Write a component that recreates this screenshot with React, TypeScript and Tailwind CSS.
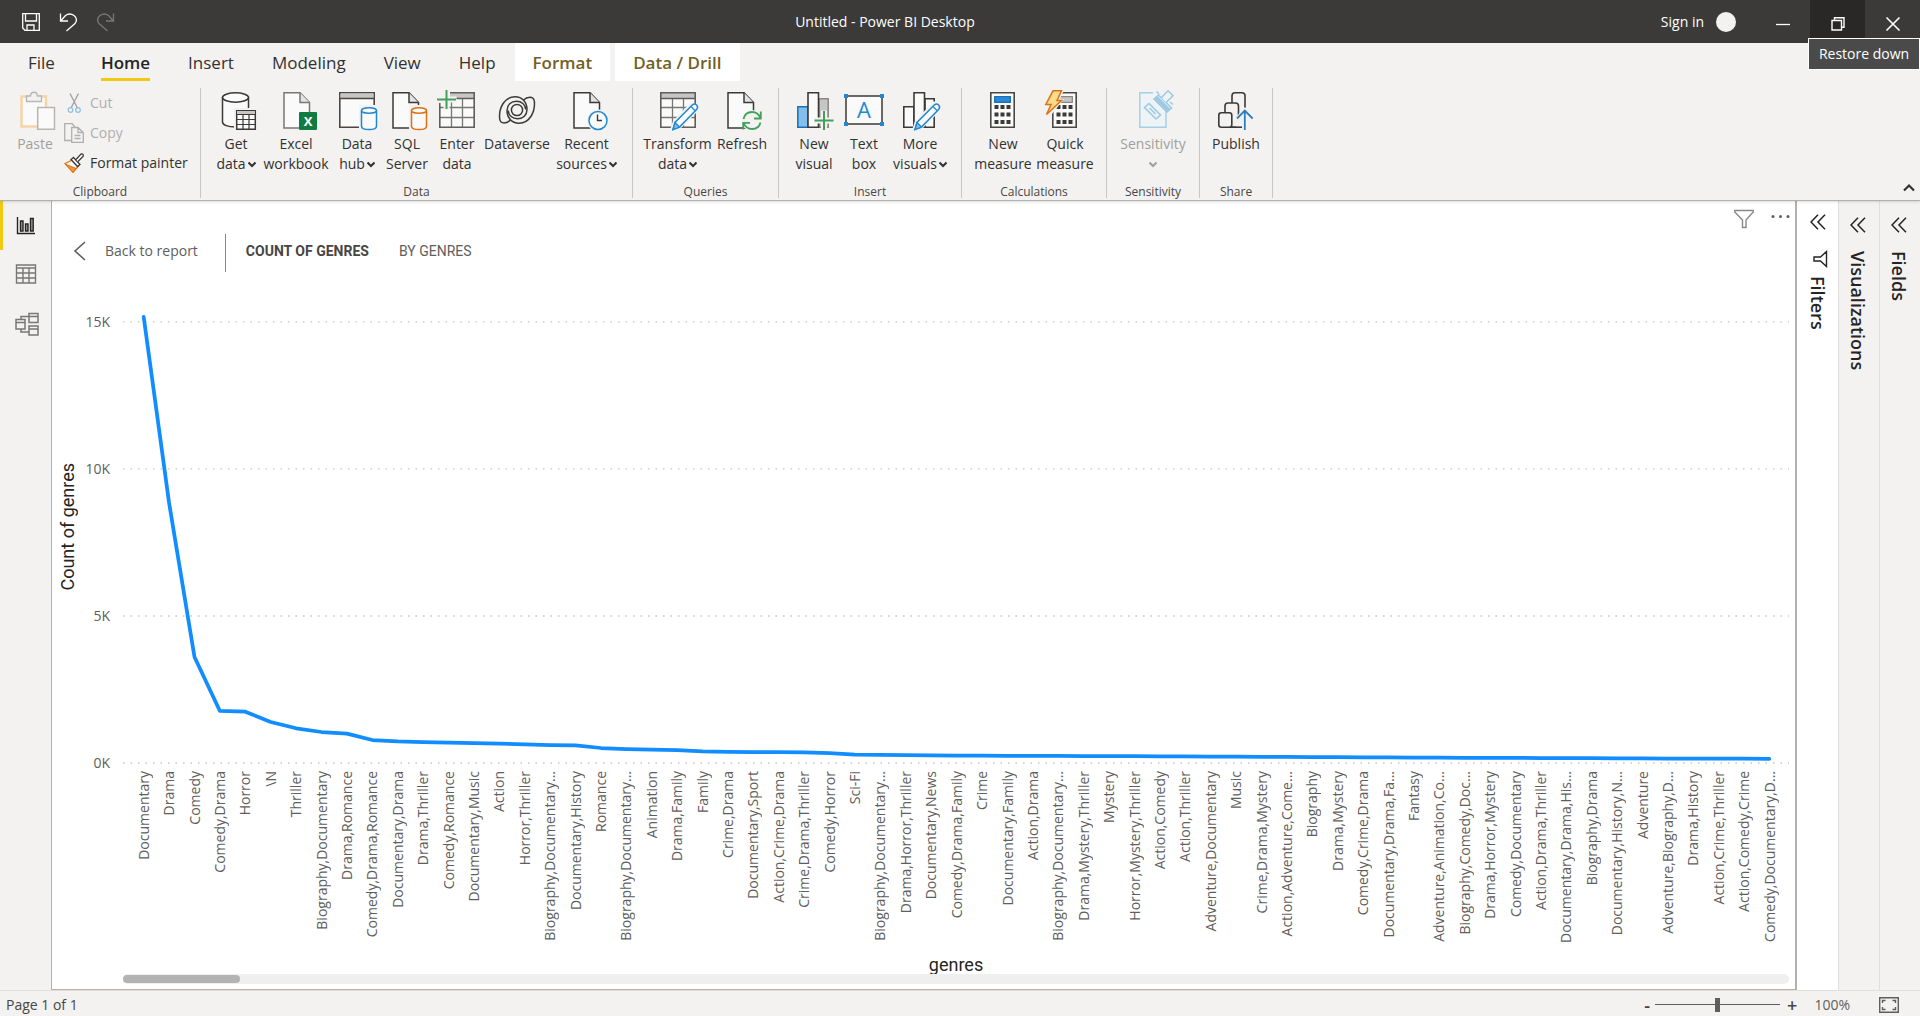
import type { ReactNode } from "react";

interface RibbonItem {
  lines: string[];
  icon: ReactNode;
  width: string;
  caret?: boolean;
  disabled?: boolean;
}

interface RibbonGroupData {
  name: string;
  padding: string;
  items: RibbonItem[];
}

interface GenreCount {
  name: string;
  count: number;
}

const DARK = "#3b3a39";
const BLUE = "#1f88cf";
const GREEN = "#41a05a";

// Top of the y axis, a little above the highest tick
const Y_MAX = 15780;
const TICKS = [15000, 10000, 5000, 0];

const genres: GenreCount[] = [
  { name: "Documentary", count: 15170 },
  { name: "Drama", count: 8840 },
  { name: "Comedy", count: 3605 },
  { name: "Comedy,Drama", count: 1769 },
  { name: "Horror", count: 1745 },
  { name: "\\N", count: 1395 },
  { name: "Thriller", count: 1180 },
  { name: "Biography,Documentary", count: 1054 },
  { name: "Drama,Romance", count: 997 },
  { name: "Comedy,Drama,Romance", count: 782 },
  { name: "Documentary,Drama", count: 738 },
  { name: "Drama,Thriller", count: 714 },
  { name: "Comedy,Romance", count: 690 },
  { name: "Documentary,Music", count: 673 },
  { name: "Action", count: 656 },
  { name: "Horror,Thriller", count: 636 },
  { name: "Biography,Documentary...", count: 612 },
  { name: "Documentary,History", count: 602 },
  { name: "Romance", count: 510 },
  { name: "Biography,Documentary...", count: 476 },
  { name: "Animation", count: 459 },
  { name: "Drama,Family", count: 440 },
  { name: "Family", count: 398 },
  { name: "Crime,Drama", count: 378 },
  { name: "Documentary,Sport", count: 372 },
  { name: "Action,Crime,Drama", count: 367 },
  { name: "Crime,Drama,Thriller", count: 360 },
  { name: "Comedy,Horror", count: 338 },
  { name: "Sci-Fi", count: 286 },
  { name: "Biography,Documentary...", count: 275 },
  { name: "Drama,Horror,Thriller", count: 265 },
  { name: "Documentary,News", count: 256 },
  { name: "Comedy,Drama,Family", count: 252 },
  { name: "Crime", count: 250 },
  { name: "Documentary,Family", count: 246 },
  { name: "Action,Drama", count: 242 },
  { name: "Biography,Documentary...", count: 240 },
  { name: "Drama,Mystery,Thriller", count: 237 },
  { name: "Mystery", count: 234 },
  { name: "Horror,Mystery,Thriller", count: 230 },
  { name: "Action,Comedy", count: 226 },
  { name: "Action,Thriller", count: 222 },
  { name: "Adventure,Documentary", count: 218 },
  { name: "Music", count: 214 },
  { name: "Crime,Drama,Mystery", count: 210 },
  { name: "Action,Adventure,Come...", count: 207 },
  { name: "Biography", count: 204 },
  { name: "Drama,Mystery", count: 200 },
  { name: "Comedy,Crime,Drama", count: 195 },
  { name: "Documentary,Drama,Fa...", count: 190 },
  { name: "Fantasy", count: 184 },
  { name: "Adventure,Animation,Co...", count: 180 },
  { name: "Biography,Comedy,Doc...", count: 177 },
  { name: "Drama,Horror,Mystery", count: 175 },
  { name: "Comedy,Documentary", count: 172 },
  { name: "Action,Drama,Thriller", count: 169 },
  { name: "Documentary,Drama,His...", count: 167 },
  { name: "Biography,Drama", count: 164 },
  { name: "Documentary,History,N...", count: 160 },
  { name: "Adventure", count: 156 },
  { name: "Adventure,Biography,D...", count: 152 },
  { name: "Drama,History", count: 150 },
  { name: "Action,Crime,Thriller", count: 147 },
  { name: "Action,Comedy,Crime", count: 145 },
  { name: "Comedy,Documentary,D...", count: 143 },
];

function Icon({ children }: { children: ReactNode }) {
  return (
    <svg className="h-10 w-10 overflow-visible" viewBox="0 0 40 40" fill="none" aria-hidden="true">
      {children}
    </svg>
  );
}

function Caret() {
  return (
    <svg className="h-2 w-2" viewBox="0 0 8 8" fill="none" stroke="currentColor" strokeWidth="2" aria-hidden="true">
      <path d="M.5 2.5 4 6 7.500 2.500" />
    </svg>
  );
}

/* ---------- shared icon parts ---------- */

function Page({ x = 6, color = DARK }: { x?: number; color?: string }) {
  return (
    <g transform={`translate(${x} 0)`} stroke={color} strokeWidth="1.5">
      <path d="M1 2.8H17L26.5 12.5V38H1Z" fill="#fafafa" />
      <path d="M17 2.8V12.5H26.5" fill="#e4e3e2" />
    </g>
  );
}

function Grid() {
  return (
    <g>
      <path d="M2.8 2.8H37.2V37.2H2.8Z" fill="#fafafa" />
      <path d="M3 3H37V8H3Z" fill="#c8c6c4" />
      <path d="M3 17.5H37M3 27.5H37M14.5 8V37M25.5 8V37" stroke="#797775" strokeWidth="1.3" />
      <path d="M2.8 2.8H37.2V37.2H2.8ZM3 8.5H37" stroke="#605e5c" strokeWidth="1.6" />
    </g>
  );
}

function SmallCylinder({ color }: { color: string }) {
  return (
    <g>
      <path d="M22 15H42V42H22Z" fill="#f3f2f1" />
      <g stroke={color} strokeWidth="1.5">
        <path d="M24.5 20.5V36C24.5 38.2 27.8 39.6 32 39.6S39.5 38.2 39.5 36V20.5" fill="#fafafa" />
        <ellipse cx="32" cy="20.5" rx="7.5" ry="2.8" fill="#fafafa" />
      </g>
    </g>
  );
}

function Pencil() {
  return (
    <g>
      <path d="M11 43 15 31 34 11 42 19 23 38Z" fill="#f3f2f1" />
      <path d="M15 39.5 17 32.5 34.5 14.8C37.5 12.5 41 16 38.8 19.2L21.5 37Z" fill="#fafafa" stroke={BLUE} strokeWidth="1.5" />
      <path d="M15 39.5 17 32.5 21.5 37Z" fill="#83beec" stroke={BLUE} strokeWidth="1.3" />
      <path d="M33 16.5 37 20.5" stroke={BLUE} strokeWidth="1.3" />
    </g>
  );
}

function Plus({ x, y }: { x: number; y: number }) {
  return (
    <g transform={`translate(${x} ${y})`}>
      <path d="M-10 0H10M0-10V10" stroke="#f3f2f1" strokeWidth="6" />
      <path d="M-9.5 0H9.5M0-9.5V9.5" stroke={GREEN} strokeWidth="2" />
    </g>
  );
}

function Keys({ screen, line }: { screen: string; line: string }) {
  return (
    <g>
      <path d="M7.8 2.8H31.2V37.2H7.8Z" fill="#fafafa" stroke="#4a4846" strokeWidth="1.6" />
      <path d="M11.7 6.7H27.3V12.3H11.7Z" fill={screen} stroke={line} strokeWidth="1.3" />
      {[15, 22.5, 30].map((y) =>
        [11.5, 17.5, 23.5].map((x) => <rect key={`${x}-${y}`} x={x} y={y} width="4" height="4" fill={DARK} />)
      )}
    </g>
  );
}

/* ---------- ribbon icons ---------- */

const getDataIcon = (
  <Icon>
    <path d="M6.5 7V32C6.5 35 12 37 19.5 37S32.5 35 32.5 32V7" fill="#fafafa" stroke={DARK} strokeWidth="1.5" />
    <ellipse cx="19.5" cy="7.5" rx="13" ry="4.7" fill="#fafafa" stroke={DARK} strokeWidth="1.5" />
    <path d="M18 18H42V42H18Z" fill="#f3f2f1" />
    <path d="M20.7 20.7H39.3V39.3H20.7Z" fill="#fafafa" stroke={DARK} strokeWidth="1.5" />
    <path d="M21 21H39V24H21Z" fill="#c8c6c4" />
    <path d="M21 24.5H39M21 29.5H39M21 34.5H39M27 25V39M33 25V39" stroke={DARK} strokeWidth="1.2" />
  </Icon>
);

const excelIcon = (
  <Icon>
    <Page x={7} color="#797775" />
    <rect x="23" y="22" width="18" height="18" rx="1" fill="#107c41" />
    <text x="32" y="35.5" textAnchor="middle" fontSize="13" fontWeight="700" fill="#fff" fontFamily="Open Sans, sans-serif">X</text>
  </Icon>
);

const dataHubIcon = (
  <Icon>
    <path d="M2.8 2.8H37.2V37.2H2.8Z" fill="#fafafa" stroke="#4a4846" strokeWidth="1.6" />
    <path d="M3.5 3.5H36.5V8H3.5Z" fill="#c8c6c4" />
    <path d="M3 8.5H37" stroke="#4a4846" strokeWidth="1.5" />
    <SmallCylinder color={BLUE} />
  </Icon>
);

const sqlIcon = (
  <Icon>
    <Page x={5} />
    <SmallCylinder color="#db7215" />
  </Icon>
);

const enterDataIcon = (
  <Icon>
    <Grid />
    <path d="M0 0H13V13H0Z" fill="#f3f2f1" />
    <Plus x={9.5} y={9.5} />
  </Icon>
);

// The swirl is one stroke and the same stroke turned half way round
const SWIRL = "M13.5 30C10 33.5 3.5 34.5 2.7 29C1.5 18 7.5 6.8 18 6.8C25.5 6.8 30 12.5 30 19.5C30 25 26 28.800 20.500 28.800C15.500 28.800 11.500 25.500 11.200 20.500";

const dataverseIcon = (
  <Icon>
    <g stroke={DARK} strokeWidth="1.5">
      <path d={SWIRL} />
      <path d={SWIRL} transform="rotate(180 20 20)" />
      <circle cx="20" cy="20" r="5.6" />
    </g>
  </Icon>
);

const recentIcon = (
  <Icon>
    <Page x={6} />
    <circle cx="31" cy="30.5" r="11" fill="#f3f2f1" />
    <circle cx="31" cy="30.5" r="9" fill="#fafafa" stroke={BLUE} strokeWidth="1.5" />
    <path d="M30.5 24.5V30.5H35" stroke={DARK} strokeWidth="1.4" />
  </Icon>
);

const transformIcon = (
  <Icon>
    <Grid />
    <Pencil />
  </Icon>
);

const refreshIcon = (
  <Icon>
    <Page x={5} />
    <circle cx="30" cy="30.5" r="10.5" fill="#f3f2f1" />
    <g stroke={GREEN} strokeWidth="1.8">
      <path d="M21.5 29C22.5 24.5 26 22 30 22C34 22 37 24.5 38.5 28M38.8 21.5V28.5H32" />
      <path d="M38.5 32.5C37.5 36.5 34 39 30 39C26 39 23 36.5 21.5 33M21.2 39.5V32.8H28" />
    </g>
  </Icon>
);

const newVisualIcon = (
  <Icon>
    <path d="M25 8.8H34.2V37.2H25Z" fill="#c8c6c4" stroke="#8a8886" strokeWidth="1.5" />
    <path d="M3.8 16.8H14V37.2H3.8Z" fill="#83beec" stroke="#1a6fb5" strokeWidth="1.5" />
    <path d="M14 2.8H24.5V37.2H14Z" fill="#fafafa" stroke={DARK} strokeWidth="1.6" />
    <Plus x={30} y={30.5} />
  </Icon>
);

const textBoxIcon = (
  <Icon>
    <path d="M2 6H38V34H2Z" fill="#fafafa" stroke={DARK} strokeWidth="1.5" />
    {[2, 38].map((x) =>
      [6, 34].map((y) => <rect key={`${x}-${y}`} x={x - 2} y={y - 2} width="4" height="4" fill={BLUE} />)
    )}
    <text x="20" y="28" textAnchor="middle" fontSize="22" fill={BLUE} fontFamily="Open Sans, sans-serif">A</text>
  </Icon>
);

const moreVisualsIcon = (
  <Icon>
    <g fill="#fafafa" stroke={DARK} strokeWidth="1.6">
      <path d="M25 8.8H34.2V37.2H25Z" />
      <path d="M3.8 16.8H14V37.2H3.8Z" />
      <path d="M14 2.8H24.5V37.2H14Z" />
    </g>
    <Pencil />
  </Icon>
);

const newMeasureIcon = (
  <Icon>
    <Keys screen="#2b88d8" line="#1a6fb5" />
  </Icon>
);

const quickMeasureIcon = (
  <Icon>
    <Keys screen="#c8c6c4" line="#8a8886" />
    <path d="M7-2H20L15 9H19L3 29H-2L2 17H-2Z" fill="#f3f2f1" />
    <path d="M8 .8H16.5L12 10.5H16.5L1.5 24.5 6 14.5H.8Z" fill="#fddb8b" stroke="#db7215" strokeWidth="1.5" />
  </Icon>
);

const sensitivityIcon = (
  <Icon>
    <path d="M6.8 2.8H33V37.2H6.8Z" fill="#eef3f6" stroke="#a6cfe6" strokeWidth="1.5" />
    <path d="M18 0H42V22L36 24Z" fill="#f3f2f1" />
    <g stroke="#9ccae4" strokeWidth="1.6" fill="#eef3f6">
      <path d="M16 13.5 27.5 25 23 29 11.5 17.5Z" />
      <path d="M16.5 18 22.5 24" />
      <path d="M25.5 5 38.5 18 34 22 21 9Z" />
      <path d="M28.5 7.5 35 .8 40 5.8 33 12.5" />
      <path d="M23.5 1.5 26 4M37 12 40 14.5" />
    </g>
    <path d="M23 7.5 36 20.5" stroke="#9ccae4" strokeWidth="4" />
  </Icon>
);

const publishIcon = (
  <Icon>
    <g stroke={DARK} strokeWidth="1.6" fill="#f3f2f1">
      <path d="M16 37.2H29V5.8Q29 2.8 26 2.8H19Q16 2.8 16 5.8Z" />
      <path d="M9 37.2H22.5V16Q22.5 13 19.5 13H12Q9 13 9 16Z" />
      <rect x="2.8" y="22.8" width="13" height="14.4" rx="2.5" />
    </g>
    <path d="M20 42V27L29 17 38 27V42Z" fill="#f3f2f1" />
    <path d="M15 37.2H26" stroke={DARK} strokeWidth="1.6" />
    <path d="M28.8 40V21M21 28.5 28.8 20.5 36.6 28.5" stroke="#2b7fbf" strokeWidth="1.8" />
  </Icon>
);

const ribbonGroups: RibbonGroupData[] = [
  {
    name: "Data",
    padding: "px-2",
    items: [
      { lines: ["Get", "data"], icon: getDataIcon, width: "w-[54px]", caret: true },
      { lines: ["Excel", "workbook"], icon: excelIcon, width: "w-[66px]" },
      { lines: ["Data", "hub"], icon: dataHubIcon, width: "w-[56px]", caret: true },
      { lines: ["SQL", "Server"], icon: sqlIcon, width: "w-[44px]" },
      { lines: ["Enter", "data"], icon: enterDataIcon, width: "w-[56px]" },
      { lines: ["Dataverse"], icon: dataverseIcon, width: "w-[64px]" },
      { lines: ["Recent", "sources"], icon: recentIcon, width: "w-[75px]", caret: true },
    ],
  },
  {
    name: "Queries",
    padding: "px-2",
    items: [
      { lines: ["Transform", "data"], icon: transformIcon, width: "w-[73px]", caret: true },
      { lines: ["Refresh"], icon: refreshIcon, width: "w-[56px]" },
    ],
  },
  {
    name: "Insert",
    padding: "px-3",
    items: [
      { lines: ["New", "visual"], icon: newVisualIcon, width: "w-[46px]" },
      { lines: ["Text", "box"], icon: textBoxIcon, width: "w-[54px]" },
      { lines: ["More", "visuals"], icon: moreVisualsIcon, width: "w-[58px]", caret: true },
    ],
  },
  {
    name: "Calculations",
    padding: "px-[10px]",
    items: [
      { lines: ["New", "measure"], icon: newMeasureIcon, width: "w-[62px]" },
      { lines: ["Quick", "measure"], icon: quickMeasureIcon, width: "w-[62px]" },
    ],
  },
  {
    name: "Sensitivity",
    padding: "px-3",
    items: [{ lines: ["Sensitivity", ""], icon: sensitivityIcon, width: "w-[68px]", caret: true, disabled: true }],
  },
  {
    name: "Share",
    padding: "px-3",
    items: [{ lines: ["Publish"], icon: publishIcon, width: "w-[48px]" }],
  },
];

function TitleBar() {
  return (
    <header className="flex h-[43px] shrink-0 items-center bg-[#3b3a39] text-sm text-white">
      <div className="flex items-center gap-[18px] pl-[21px]">
        <button type="button" aria-label="Save">
          <svg className="h-5 w-5" viewBox="0 0 20 20" fill="none" stroke="#fff" strokeWidth="1.3" aria-hidden="true">
            <path d="M1.7 1.7H18.3V18.3H4L1.7 16ZM4.5 2V9H15.5V2M6 18V13H13V18" />
          </svg>
        </button>
        <button type="button" aria-label="Undo">
          <svg className="h-5 w-5" viewBox="0 0 20 20" fill="none" stroke="#fff" strokeWidth="1.3" aria-hidden="true">
            <path d="M1.5 1.5V9H9M1.8 8.8 6.5 3.5C12-.5 20.5 5 16 11.5L7.5 19" />
          </svg>
        </button>
        <button type="button" aria-label="Redo" disabled>
          <svg className="h-5 w-5" viewBox="0 0 20 20" fill="none" stroke="#797775" strokeWidth="1.3" aria-hidden="true">
            <path d="M16.5 1.5V9H9M16.2 8.8 11.5 3.5C6-.5-2.5 5 2 11.5L10.5 19" />
          </svg>
        </button>
      </div>
      <div className="flex-1 pr-2 text-center">Untitled - Power BI Desktop</div>
      <button type="button" className="flex items-center gap-3 pr-[19px]">
        Sign in
        <span className="h-5 w-5 rounded-full bg-[#f3f2f1]" />
      </button>
      <button type="button" aria-label="Minimize" className="flex h-full w-[55px] items-center justify-center">
        <svg className="h-4 w-4" viewBox="0 0 16 16" stroke="#fff" strokeWidth="1.3" aria-hidden="true">
          <path d="M1 10.5H15" />
        </svg>
      </button>
      <div className="relative h-full">
        <button
          type="button"
          aria-label="Restore down"
          className="flex h-full w-[55px] items-center justify-center bg-[#292827]"
        >
          <svg className="mt-1 h-4 w-4" viewBox="0 0 16 16" fill="none" stroke="#fff" strokeWidth="1.4" aria-hidden="true">
            <path d="M2 4.5H11.5V14H2ZM4.5 4V1.8H14V11.3H12" />
          </svg>
        </button>
        <div
          role="tooltip"
          className="absolute top-[38px] -right-[55px] z-20 flex h-8 w-28 items-center justify-center border border-white bg-[#4a4a4a] whitespace-nowrap"
        >
          Restore down
        </div>
      </div>
      <button type="button" aria-label="Close" className="flex h-full w-[55px] items-center justify-center">
        <svg className="mt-1 h-4 w-4" viewBox="0 0 16 16" stroke="#fff" strokeWidth="1.6" aria-hidden="true">
          <path d="M1.5 1.5 14.5 14.5M14.5 1.5 1.5 14.5" />
        </svg>
      </button>
    </header>
  );
}

function Tabs() {
  return (
    <nav className="flex h-[38px] text-[17px] leading-6 text-[#323130]">
      <button type="button" className="mr-2 ml-[9px] px-[19px] pt-0.5">File</button>
      <button type="button" className="px-[19px] font-semibold text-[#252423]">
        <span className="flex h-full items-center border-b-[3px] border-[#f2c811] pt-1">Home</span>
      </button>
      <button type="button" className="px-[19px] pt-0.5">Insert</button>
      <button type="button" className="px-[19px] pt-0.5">Modeling</button>
      <button type="button" className="px-[19px] pt-0.5">View</button>
      <button type="button" className="px-[19px] pt-0.5">Help</button>
      <button type="button" className="bg-white px-[18px] pt-0.5 font-semibold text-[#72601f]">Format</button>
      <button type="button" className="ml-[5px] bg-white px-[18px] pt-0.5 font-semibold text-[#72601f]">Data / Drill</button>
    </nav>
  );
}

function ClipboardGroup() {
  return (
    <div className="flex h-[110px] w-[201px] flex-col justify-between border-r border-[#c8c6c4]">
      <div className="flex pl-[15px]">
        <button type="button" disabled className="flex w-10 flex-col items-center pt-0.5 text-sm leading-5 text-[#a19f9d]">
          <Icon>
            <path d="M6.5 6.5H31V36.5H6.5Z" fill="#fafafa" stroke="#f5d5a8" strokeWidth="2.5" />
            <path d="M11.5 11.5V6H15.5C16 1 22 1 22.5 6H26.5V11.5Z" fill="#f3f2f1" stroke="#b8b6b4" strokeWidth="1.4" />
            <path d="M22.7 17.5H39.5V39.3H22.7Z" fill="#fafafa" stroke="#b8b6b4" strokeWidth="1.5" />
          </Icon>
          <span className="mt-1">Paste</span>
        </button>
        <div className="flex flex-col pl-[9px] text-sm">
          <button type="button" disabled className="flex h-[30px] items-center gap-1.5 text-[#b1afad]">
            <svg className="h-5 w-5" viewBox="0 0 20 20" fill="none" strokeWidth="1.3" aria-hidden="true">
              <path d="M6 .5 13.5 15M14.5 .5 7 15" stroke="#a19f9d" />
              <circle cx="6.5" cy="17" r="2.3" stroke="#8fc1e0" />
              <circle cx="14" cy="17" r="2.3" stroke="#8fc1e0" />
            </svg>
            Cut
          </button>
          <button type="button" disabled className="flex h-[30px] items-center gap-1.5 text-[#b1afad]">
            <svg className="h-5 w-5" viewBox="0 0 20 20" fill="none" stroke="#b1afad" strokeWidth="1.3" aria-hidden="true">
              <path d="M7 17.5H.7V.7H8L11 4" />
              <path d="M7.7 4.5H14L19.3 9.5V19.3H7.7ZM14 4.5V9.5H19M10.5 12.5H16.5M10.5 15.5H16.5" />
            </svg>
            Copy
          </button>
          <button type="button" className="flex h-[30px] items-center gap-1.5 text-[#323130]">
            <svg className="h-5 w-5" viewBox="0 0 20 20" fill="none" aria-hidden="true">
              <path d="M1 10.5 8.5 7 14.5 13 9 19.3Z" fill="#fafafa" stroke="#db7215" strokeWidth="1.3" />
              <path d="M1 11 12 15.5 9 19.3Z" fill="#f0963c" stroke="#db7215" />
              <path d="M9.5 4.5 16 11.5 13.5 13.5 7 6.5Z" fill="#fafafa" stroke={DARK} strokeWidth="1.3" />
              <path d="M12 6.5 17 1Q20 .5 19 3.5L14 8.5" fill="#fafafa" stroke={DARK} strokeWidth="1.3" />
            </svg>
            Format painter
          </button>
        </div>
      </div>
      <div className="text-center text-xs leading-3 text-[#484644]">Clipboard</div>
    </div>
  );
}

function RibbonGroup({ group }: { group: RibbonGroupData }) {
  return (
    <div className="flex h-[110px] flex-col justify-between border-r border-[#c8c6c4]">
      <div className={`flex ${group.padding}`}>
        {group.items.map((item) => (
          <button
            key={item.lines.join(" ")}
            type="button"
            disabled={item.disabled}
            className={`flex flex-col items-center pt-0.5 text-sm leading-5 whitespace-nowrap ${item.width} ${
              item.disabled ? "text-[#a19f9d]" : "text-[#323130]"
            }`}
          >
            <span className="mb-1">{item.icon}</span>
            {item.lines.map((line, i) => (
              <span key={i} className="flex h-5 items-center gap-0.5">
                {line}
                {item.caret && i === item.lines.length - 1 && <Caret />}
              </span>
            ))}
          </button>
        ))}
      </div>
      <div className="text-center text-xs leading-3 text-[#484644]">{group.name}</div>
    </div>
  );
}

function Ribbon() {
  return (
    <div className="relative z-10 shrink-0 border-b border-[#b3b0ad] bg-[#f3f2f1] shadow-sm">
      <Tabs />
      <div className="flex h-[119px] pt-[7px]">
        <ClipboardGroup />
        {ribbonGroups.map((group) => (
          <RibbonGroup key={group.name} group={group} />
        ))}
        <button type="button" aria-label="Collapse ribbon" className="mr-[5px] mb-1.5 ml-auto self-end text-[#323130]">
          <svg className="h-3 w-3" viewBox="0 0 12 12" fill="none" stroke="currentColor" strokeWidth="2.2" aria-hidden="true">
            <path d="M1 8.5 6 3.5 11 8.5" />
          </svg>
        </button>
      </div>
    </div>
  );
}

function ViewSwitcher() {
  return (
    <nav className="flex w-[51px] shrink-0 flex-col">
      <button type="button" aria-label="Report" className="flex h-[49px] items-center border-l-[3px] border-[#f2c811] pl-[13px]">
        <svg className="h-5 w-5" viewBox="0 0 20 20" fill="none" stroke="#252423" strokeWidth="1.4" aria-hidden="true">
          <path d="M1.5 1V17.5H19" />
          <path d="M4.5 5H7V15H4.5ZM9.5 8H12V15H9.5ZM14.5 2.5H17.2V15H14.5Z" fill="#a19f9d" />
        </svg>
      </button>
      <button type="button" aria-label="Data" className="flex h-12 items-center pl-[15px]">
        <svg className="h-[22px] w-[22px]" viewBox="0 0 22 22" fill="none" stroke="#797775" strokeWidth="1.4" aria-hidden="true">
          <path d="M1.5 2H20.5V20H1.5ZM1.5 5H20.5M1.5 10H20.5M1.5 15H20.5M8 5V20M14 5V20" />
        </svg>
      </button>
      <button type="button" aria-label="Model" className="flex h-[52px] items-center pl-[15px]">
        <svg className="h-6 w-6" viewBox="0 0 24 24" fill="none" stroke="#797775" strokeWidth="1.5" aria-hidden="true">
          <path d="M1 7.5H10V17H1ZM1 10.5H10M14 1.5H23V10.5H14ZM14 4.5H23M14 14H23V23H14ZM14 17H23M6 7.5V4.5H14M6 17V20H14" />
        </svg>
      </button>
    </nav>
  );
}

function DrillHeader() {
  return (
    <div className="flex h-[98px] shrink-0 items-center pt-px pr-[5px] pl-[21px] text-sm">
      <button type="button" className="flex items-center gap-[19px] text-[#605e5c]">
        <svg className="h-5 w-[13px]" viewBox="0 0 13 20" fill="none" stroke="currentColor" strokeWidth="1.6" aria-hidden="true">
          <path d="M12 1 2 10 12 19" />
        </svg>
        Back to report
      </button>
      <div className="mt-1 mr-5 ml-[27px] h-[38px] border-l border-[#8a8886]" />
      <div className="font-[Roboto,sans-serif] font-bold text-[#484644]">COUNT OF GENRES</div>
      <div className="ml-[30px] font-[Roboto,sans-serif] text-[#605e5c]">BY GENRES</div>
      <div className="ml-auto flex items-start gap-4 self-start pt-[7px]">
        <button type="button" aria-label="Filters on this visual">
          <svg className="h-5 w-5" viewBox="0 0 20 20" fill="none" stroke="#8a8886" strokeWidth="1.4" aria-hidden="true">
            <path d="M.8 1.5H19.2V3L12 11V18.5H8.5V11L.8 3Z" />
          </svg>
        </button>
        <button type="button" aria-label="More options">
          <svg className="h-4 w-5" viewBox="0 0 20 16" fill="#605e5c" aria-hidden="true">
            <circle cx="3" cy="7.5" r="1.5" />
            <circle cx="10.5" cy="7.5" r="1.5" />
            <circle cx="18" cy="7.5" r="1.5" />
          </svg>
        </button>
      </div>
    </div>
  );
}

function LineChart() {
  const points = genres.map((genre, i) => `${i + 0.5},${Y_MAX - genre.count}`).join(" ");

  return (
    <div className="flex min-h-0 flex-1 flex-col pr-1.5 pb-[5px] pl-2">
      <div className="flex min-h-0 flex-1">
        <div className="flex w-4 items-center justify-center pb-2">
          <span className="rotate-180 font-[Roboto,sans-serif] text-lg leading-4 whitespace-nowrap text-[#252423] [writing-mode:vertical-rl]">
            Count of genres
          </span>
        </div>
        <div className="relative w-[47px] text-sm leading-5 text-[#605e5c]">
          {TICKS.map((tick) => (
            <span
              key={tick}
              className="absolute right-[13px] -translate-y-1/2"
              style={{ top: `${(1 - tick / Y_MAX) * 100}%` }}
            >
              {tick / 1000}K
            </span>
          ))}
        </div>
        <div className="relative flex-1 pr-[7px] pl-2">
          <svg className="absolute inset-0 h-full w-full overflow-visible" aria-hidden="true">
            {TICKS.map((tick) => (
              <line
                key={tick}
                x1="0"
                x2="100%"
                y1={`${(1 - tick / Y_MAX) * 100}%`}
                y2={`${(1 - tick / Y_MAX) * 100}%`}
                stroke="#c8c6c4"
                strokeWidth="1.3"
                strokeDasharray="1.5 6"
              />
            ))}
          </svg>
          <svg
            className="relative h-full w-full overflow-visible"
            viewBox={`0 0 ${genres.length} ${Y_MAX}`}
            preserveAspectRatio="none"
            role="img"
            aria-label="Count of genres by genres"
          >
            <polyline
              points={points}
              fill="none"
              stroke="#118dff"
              strokeWidth="3.75"
              strokeLinejoin="round"
              strokeLinecap="round"
              vectorEffect="non-scaling-stroke"
            />
          </svg>
        </div>
      </div>
      <div className="ml-[63px] flex h-[190px] shrink-0 items-start pt-2 pr-[7px] pl-2">
        {genres.map((genre, i) => (
          <div key={i} className="flex min-w-0 flex-1 justify-center">
            <span className="rotate-180 text-sm leading-5 whitespace-nowrap text-[#605e5c] [writing-mode:vertical-rl]">
              {genre.name}
            </span>
          </div>
        ))}
      </div>
      <div className="ml-[63px] h-[21px] shrink-0 text-center font-[Roboto,sans-serif] text-lg leading-6 text-[#252423]">
        genres
      </div>
      <div className="ml-[63px] h-2.5 shrink-0 rounded-full bg-[#efefef] py-px">
        <div className="h-2 w-[7%] rounded-full bg-[#b3b3b3]" />
      </div>
    </div>
  );
}

function DoubleChevron() {
  return (
    <svg className="h-4 w-4 shrink-0" viewBox="0 0 16 16" fill="none" stroke="#252423" strokeWidth="1.5" aria-hidden="true">
      <path d="M8 .8 1 8 8 15.2M15 .8 8 8 15 15.2" />
    </svg>
  );
}

function CollapsedPane({ title }: { title: string }) {
  return (
    <button
      type="button"
      className="flex w-[41px] shrink-0 flex-col items-center gap-[18px] border-l border-[#e1dfdd] bg-[#f3f2f1] pt-4 pr-0.5 text-lg leading-6 font-semibold text-[#252423]"
    >
      <DoubleChevron />
      <span className="[writing-mode:vertical-rl]">{title}</span>
    </button>
  );
}

function StatusBar() {
  return (
    <footer className="flex h-[26px] shrink-0 items-center border-t border-[#e1dfdd] pt-0.5 pr-[21px] pl-1.5 text-sm text-[#484644]">
      <span>Page 1 of 1</span>
      <div className="ml-auto flex items-center">
        <button type="button" aria-label="Zoom out" className="mr-[5px] text-lg leading-5 font-semibold">-</button>
        <input
          type="range"
          aria-label="Zoom level"
          defaultValue={50}
          className="h-3.5 w-[125px] appearance-none bg-[linear-gradient(#605e5c,#605e5c)] bg-[length:100%_1px] bg-center bg-no-repeat [&::-webkit-slider-thumb]:h-3.5 [&::-webkit-slider-thumb]:w-[5px] [&::-webkit-slider-thumb]:appearance-none [&::-webkit-slider-thumb]:bg-[#605e5c]"
        />
        <button type="button" aria-label="Zoom in" className="ml-[7px] text-lg leading-5 font-semibold">+</button>
        <span className="ml-[17px] text-[#605e5c]">100%</span>
        <button type="button" aria-label="Fit to page" className="ml-[29px]">
          <svg className="h-4 w-5" viewBox="0 0 20 16" fill="none" stroke="#605e5c" strokeWidth="1.4" aria-hidden="true">
            <path d="M.7 .7H19.3V15.3H.7Z" />
            <path d="M3.5 6V3.5H6.5M13.5 3.5H16.5V6M16.5 10V12.5H13.5M6.5 12.5H3.5V10" />
          </svg>
        </button>
      </div>
    </footer>
  );
}

export default function App() {
  return (
    <div className="flex h-screen flex-col overflow-hidden bg-[#f3f2f1] font-['Open_Sans',sans-serif]">
      <TitleBar />
      <Ribbon />
      <div className="flex min-h-0 flex-1">
        <ViewSwitcher />
        <main className="flex min-w-0 flex-1 flex-col border-r-2 border-b border-l border-[#b3b0ad] bg-white">
          <DrillHeader />
          <LineChart />
        </main>
        <button
          type="button"
          className="flex w-[41px] shrink-0 flex-col items-center bg-white pt-[13px] text-lg leading-6 font-semibold text-[#252423]"
        >
          <DoubleChevron />
          <svg className="mt-5 mb-2 ml-1 h-[18px] w-4 shrink-0" viewBox="0 0 16 18" fill="none" stroke="#252423" strokeWidth="1.4" aria-hidden="true">
            <path d="M14.5 1.5V16.5L8.5 11H2V7H8.5Z" />
          </svg>
          <span className="[writing-mode:vertical-rl]">Filters</span>
        </button>
        <CollapsedPane title="Visualizations" />
        <CollapsedPane title="Fields" />
      </div>
      <StatusBar />
    </div>
  );
}
